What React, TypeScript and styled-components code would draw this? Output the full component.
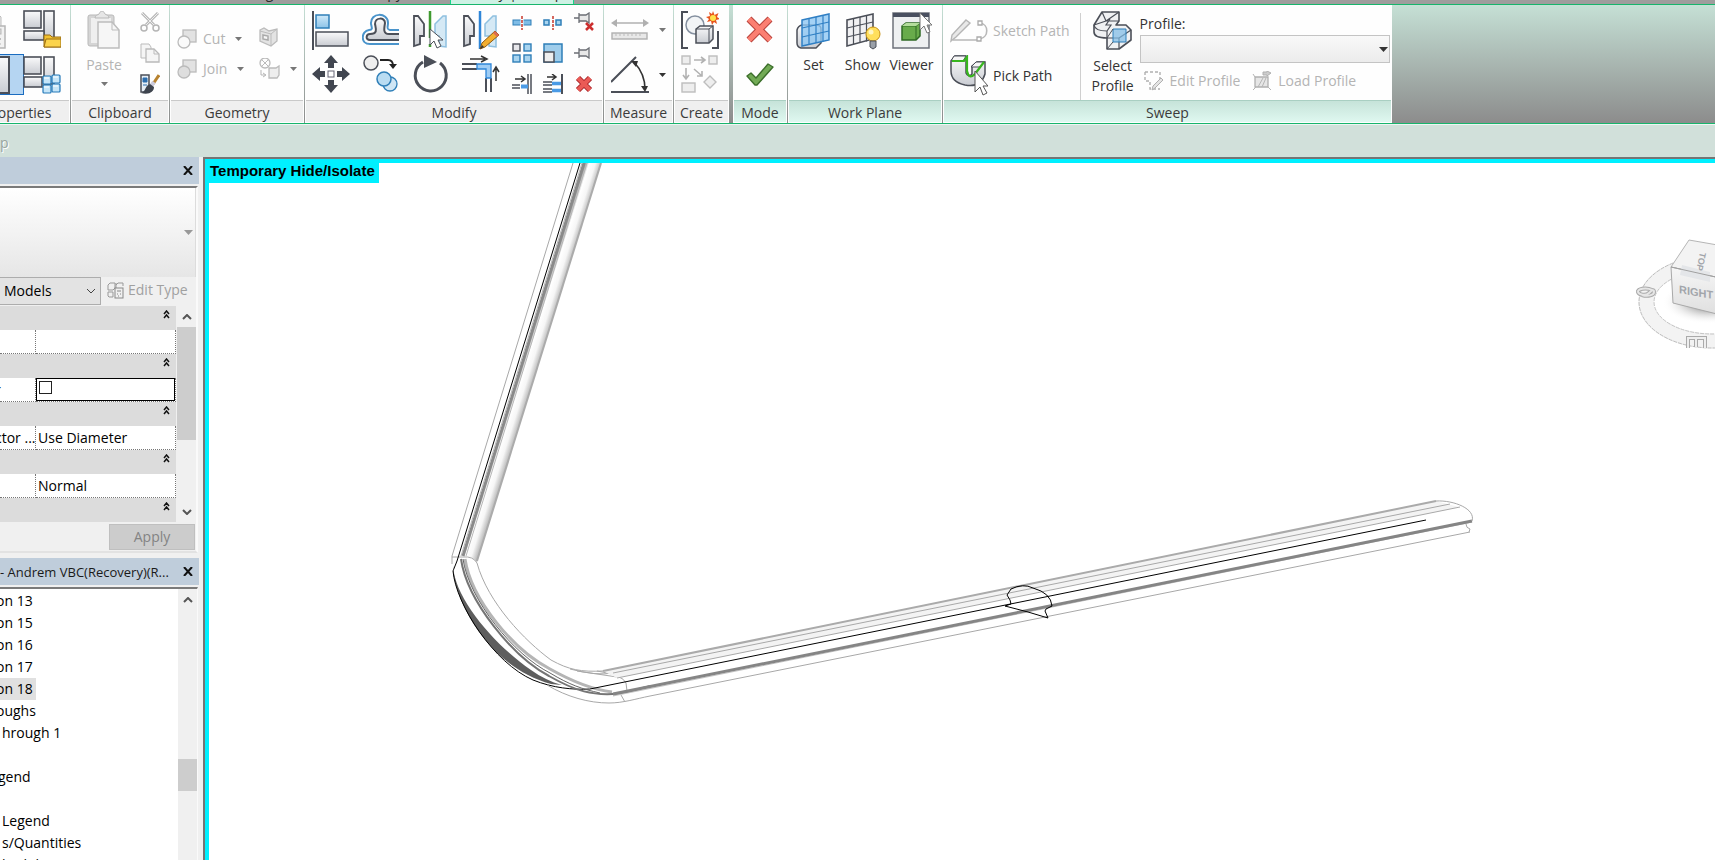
import React from "react";
import styled, { createGlobalStyle, css } from "styled-components";

const Global = createGlobalStyle`
  *, *::before, *::after { box-sizing: border-box; }
  body {
    margin: 0;
    overflow: hidden;
    background: #f0f0f0;
    color: #1a1a1a;
    font: 14px/20px "Open Sans", "Noto Sans", sans-serif;
  }
  button, select, input { font: inherit; color: inherit; margin: 0; }
`;

/* ---------- shell ---------- */

const Shell = styled.div`
  display: flex;
  flex-direction: column;
  height: 100vh;
  overflow: hidden;
`;

const TabStrip = styled.nav`
  display: flex;
  align-items: flex-end;
  flex: none;
  height: 5px;
  padding-left: 216px;
  overflow: hidden;
  background: #9f9d9d;
  border-bottom: 1px solid #17b56c;
`;

const Tab = styled.a<{ $width: number; $active?: boolean }>`
  display: block;
  flex: none;
  width: ${(p) => p.$width}px;
  height: 21px;
  text-align: center;
  text-decoration: none;
  line-height: 20px;
  color: #2b2b2b;
  ${(p) =>
    p.$active &&
    css`
      background: #cdf1e4;
      border: solid #17d58c;
      border-width: 0 1px;
    `}
`;

const Ribbon = styled.header`
  display: flex;
  flex: none;
  gap: 1px;
  height: 119px;
  overflow: hidden;
  background: linear-gradient(#c5e0d5, #8c8c8c);
  border-bottom: 1px solid #17b56c;
`;

const PanelBox = styled.section<{ $width: number; $cut?: number; $gap?: number }>`
  display: flex;
  flex: none;
  flex-direction: column;
  width: ${(p) => p.$width}px;
  margin-left: ${(p) => -(p.$cut ?? 0)}px;
  margin-right: ${(p) => p.$gap ?? 0}px;
  padding: 0 1px 1px;
  background: #fefefe;
`;

const PanelBody = styled.div`
  display: flex;
  flex: 1;
  min-height: 0;
  padding: 6px 6px 0;
`;

const PanelTitle = styled.h2<{ $green?: boolean }>`
  flex: none;
  margin: 0;
  height: 22px;
  border-top: 1px solid ${(p) => (p.$green ? "#a9cfc2" : "#c9c9c9")};
  background: ${(p) => (p.$green ? "linear-gradient(#c6e3d9, #dff8f0)" : "#efefef")};
  color: #3b3b3b;
  font-size: 14px;
  font-weight: 400;
  line-height: 24px;
  text-align: center;
  white-space: nowrap;
`;

function Panel(props: {
  title: string;
  width: number;
  cut?: number;
  gap?: number;
  green?: boolean;
  children: React.ReactNode;
}) {
  return (
    <PanelBox $width={props.width} $cut={props.cut} $gap={props.gap}>
      <PanelBody>{props.children}</PanelBody>
      <PanelTitle $green={props.green}>{props.title}</PanelTitle>
    </PanelBox>
  );
}

/* ---------- ribbon controls ---------- */

const ToolGrid = styled.div<{ $cols: number; $cell: number; $row: number; $left?: number; $top?: number }>`
  display: grid;
  grid-template-columns: repeat(${(p) => p.$cols}, ${(p) => p.$cell}px);
  grid-auto-rows: ${(p) => p.$row}px;
  align-content: start;
  margin-left: ${(p) => p.$left ?? 0}px;
  margin-top: ${(p) => p.$top ?? 0}px;
`;

const Tool = styled.button<{ $dim?: boolean; $wide?: boolean }>`
  display: flex;
  align-items: center;
  gap: ${(p) => (p.$wide ? 10 : 5)}px;
  justify-self: start;
  align-self: start;
  padding: 0;
  border: 0;
  background: none;
  color: ${(p) => (p.$dim ? "#b4b4b4" : "#333")};
  white-space: nowrap;
  svg { display: block; flex: none; }
`;

const StackTool = styled(Tool)<{ $width: number }>`
  flex-direction: column;
  gap: 5px;
  width: ${(p) => p.$width}px;
  text-align: center;
  svg + svg { margin-top: 2px; }
`;

const StateTool = styled(Tool)`
  width: 44px;
  height: 41px;
  justify-content: flex-end;
  padding-right: 12px;
  background: #b5d5f2;
  border: 1px solid #1a6cc0;
`;

const Column = styled.div<{ $gap?: number; $left?: number; $top?: number }>`
  display: flex;
  flex-direction: column;
  align-items: flex-start;
  gap: ${(p) => p.$gap ?? 0}px;
  margin-left: ${(p) => p.$left ?? 0}px;
  margin-top: ${(p) => p.$top ?? 0}px;
`;

const Divider = styled.div`
  width: 1px;
  height: 90px;
  margin-top: 2px;
  background: #cfcfcf;
`;

const Field = styled.label`
  display: flex;
  flex-direction: column;
  color: #333;
`;

const ComboWrap = styled.span`
  position: relative;
  display: block;
  margin-top: 1px;
  > svg {
    position: absolute;
    right: 2px;
    top: 12px;
    pointer-events: none;
  }
`;

const Combo = styled.select`
  display: block;
  appearance: none;
  width: 250px;
  height: 28px;
  border: 1px solid #c4c4c4;
  border-radius: 0;
  background: linear-gradient(#f9f9f9, #ececec);
`;

const ToolRow = styled.div`
  display: flex;
  gap: 12px;
  margin: 8px 0 0 4px;
`;

const OptionsBar = styled.div`
  flex: none;
  height: 33px;
  padding: 8px 0 0;
  border-top: 1px solid #eef5f2;
  background: #d1e0da;
  color: #9aa5a0;
  text-shadow: 1px 1px 0 #fff;
`;

/* ---------- docked palettes ---------- */

const Main = styled.div`
  display: flex;
  flex: 1;
  min-height: 0;
`;

const Dock = styled.aside`
  display: flex;
  flex: none;
  flex-direction: column;
  width: 203px;
  overflow: hidden;
  border-right: 4px solid #f0f0f0;
`;

const DockTitle = styled.header`
  display: flex;
  flex: none;
  align-items: center;
  justify-content: space-between;
  height: 27px;
  padding-right: 6px;
  background: #bfcddb;
  color: #1a1a1a;
  white-space: nowrap;
`;

const DockName = styled.span`
  font-size: 13px;
`;

const CloseButton = styled.button`
  margin-left: auto;
  padding: 0;
  border: 0;
  background: none;
  svg { display: block; }
`;

const PropsPanel = styled.div`
  flex: none;
  height: 367px;
  margin: 2px 1px 5px 0;
  border-top: 2px solid #7a7a7a;
  border-right: 2px solid #fafafa;
  border-bottom: 2px solid #e2e2e2;
`;

const TypeSelector = styled.button`
  display: flex;
  align-items: center;
  justify-content: flex-end;
  width: 100%;
  height: 89px;
  padding: 0 2px 0 0;
  border: 0;
  border-right: 1px solid #dcdcdc;
  background: linear-gradient(#fff, #e6e6e6);
`;

const FilterRow = styled.div`
  display: flex;
  height: 29px;
`;

const FilterWrap = styled.span`
  position: relative;
  > svg { position: absolute; right: 5px; top: 11px; pointer-events: none; }
`;

const FilterSelect = styled.select`
  appearance: none;
  width: 101px;
  height: 28px;
  padding: 0 0 0 4px;
  border: 1px solid #adadad;
  border-left: 0;
  border-radius: 0;
  background: #e3e3e3;
  color: #000;
`;

const EditType = styled(Tool)`
  height: 26px;
  gap: 4px;
  margin-left: 6px;
  color: #a0a0a0;
`;

const GridArea = styled.div`
  display: flex;
  height: 216px;
  overflow: hidden;
`;

const PropTable = styled.table`
  width: 176px;
  border-collapse: separate;
  border-spacing: 0;
  table-layout: fixed;
`;

const GroupCell = styled.th`
  height: 24px;
  padding: 4px 6px 0 0;
  background: #dcdcdc;
  line-height: 0;
  text-align: right;
  vertical-align: top;
  button { padding: 0; border: 0; background: none; line-height: 0; }
`;

const NameCell = styled.td`
  width: 36px;
  height: 24px;
  padding: 0;
  overflow: hidden;
  border-right: 1px dotted #777;
  border-bottom: 1px dotted #777;
  background: #fff;
  color: #000;
  white-space: nowrap;
`;

const NameText = styled.span`
  display: block;
  margin-left: -5px;
`;

const ValueCell = styled.td<{ $focus?: boolean }>`
  height: 24px;
  padding: 0 2px;
  border-right: 1px dotted #777;
  border-bottom: 1px dotted #777;
  background: #fff;
  color: #000;
  ${(p) => p.$focus && css`box-shadow: inset 0 0 0 1px #000;`}
`;

const Check = styled.input`
  display: block;
  appearance: none;
  width: 13px;
  height: 13px;
  margin: 0 0 4px 1px;
  border: 1px solid #222;
  background: #fff;
`;

const Scrollbar = styled.div`
  display: flex;
  flex-direction: column;
  flex: none;
  align-items: center;
  width: 19px;
  margin-left: 1px;
  background: #f0f0f0;
`;

const ScrollArrow = styled.button`
  display: flex;
  flex: none;
  align-items: center;
  justify-content: center;
  width: 100%;
  height: 21px;
  padding: 0;
  border: 0;
  background: none;
`;

const Thumb = styled.div<{ $before: number; $size: number }>`
  width: 100%;
  height: ${(p) => p.$size}px;
  margin-top: ${(p) => p.$before}px;
  margin-bottom: auto;
  background: #cdcdcd;
`;

const ApplyButton = styled.button`
  display: block;
  width: 86px;
  height: 26px;
  margin: 2px 1px 0 auto;
  padding: 0;
  border: 1px solid #bfbfbf;
  background: #ccc;
  color: #838383;
`;

const Browser = styled.div`
  display: flex;
  flex: 1;
  min-height: 0;
  margin-top: 2px;
  margin-right: 1px;
  overflow: hidden;
  border-top: 2px solid #7a7a7a;
  border-right: 1px solid #fafafa;
  background: #fff;
`;

const Tree = styled.ul`
  flex: 1;
  margin: 0 0 0 -4px;
  padding: 1px 0 0;
  list-style: none;
  overflow: hidden;
`;

const TreeItem = styled.li<{ $selected?: boolean; $level: number }>`
  width: fit-content;
  height: 22px;
  padding: 0 3px 0 ${(p) => p.$level * 2}px;
  background: ${(p) => (p.$selected ? "#e0e0e0" : "none")};
  color: #000;
  line-height: 22px;
  white-space: pre;
`;

/* ---------- drawing area ---------- */

const ViewFrame = styled.main`
  position: relative;
  flex: 1;
  min-width: 0;
  overflow: hidden;
  border: solid #757575;
  border-width: 2px 0 0 2px;
`;

const IsolateFrame = styled.div`
  height: 100%;
  overflow: hidden;
  border: solid #00f0ff;
  border-width: 4px 0 0 4px;
  background: #fff;
`;

const IsolateLabel = styled.div`
  position: absolute;
  top: 0;
  left: 0;
  padding: 2px 4px 2px 5px;
  background: #00f0ff;
  color: #000;
  font: bold 15px/20px "Liberation Sans", Arial, sans-serif;
  white-space: nowrap;
`;

const Canvas = styled.svg`
  display: block;
  width: 100%;
  height: 100%;
`;

const HiddenDefs = styled.svg`
  position: absolute;
  width: 0;
  height: 0;
`;

/* ---------- icons ---------- */

function Icon({ w, h, children }: { w: number; h: number; children: React.ReactNode }) {
  return (
    <svg width={w} height={h} viewBox={`0 0 ${w} ${h}`} fill="none" aria-hidden="true">
      {children}
    </svg>
  );
}

const Caret = ({ color = "#444" }: { color?: string }) => (
  <Icon w={7} h={4}><path d="M0 0h7L3.500 4z" fill={color} /></Icon>
);

const DK = "#4b4f58";
const BL = "#2f7fb8";

const WindowFolder = () => (
  <Icon w={38} h={39}>
    <g stroke={DK} strokeWidth="1.600" fill="url(#metal)">
      <rect x="1" y="1" width="17" height="17" /><rect x="21" y="1" width="10" height="27" /><rect x="1" y="21" width="20" height="9" />
    </g>
    <path d="M21 37V25h6l2 2h9v10z" fill="#f2c22e" stroke="#9a6d12" />
    <path d="M21 37l2-8h15v8z" fill="#fbd34c" stroke="#9a6d12" />
  </Icon>
);
const WindowFamily = () => (
  <Icon w={38} h={39}>
    <g stroke={DK} strokeWidth="1.600" fill="url(#metal)">
      <rect x="1" y="1" width="17" height="17" /><rect x="21" y="1" width="10" height="27" /><rect x="1" y="21" width="18" height="10" />
    </g>
    <g fill="#c5e5f8" stroke="#2378b8" strokeWidth="1.200">
      <rect x="20" y="20" width="8" height="8" rx="1" /><rect x="29" y="19" width="8" height="8" rx="1" />
      <rect x="20" y="29" width="8" height="8" rx="1" /><rect x="29" y="28" width="8" height="8" rx="1" />
    </g>
    <path d="M21 22h5M30 21h5M21 31h5M30 30h5" stroke="#fff" />
  </Icon>
);
const DimProps = () => (
  <Icon w={26} h={38}>
    <path d="M8 1h8l5 5v9M8 1v14" stroke="#bbb" fill="#eee" />
    <rect x="2" y="15" width="23" height="22" fill="#f2f2f2" stroke="#b5b5b5" strokeWidth="1.500" />
    <rect x="14" y="18" width="7" height="5" stroke="#b5b5b5" fill="#ddd" /><path d="M14 28h6m-2-2 3 2-3 2M14 33h7" stroke="#b5b5b5" />
  </Icon>
);
const Sheet = () => (
  <Icon w={16} h={38}><rect x="-4" y="1" width="18" height="36" fill="url(#metal)" stroke={DK} strokeWidth="2" /><path d="M3 5v26" stroke="#9aa" /></Icon>
);

const PasteIcon = () => (
  <Icon w={34} h={39}>
    <rect x="1" y="4" width="26" height="31" rx="2" fill="#d5d5d5" stroke="#b9b9b9" />
    <rect x="4" y="7" width="20" height="25" fill="#efefef" />
    <path d="M8 7c0-3 3-3 4-4s1-3 3-3 2 2 3 3 4 1 4 4z" fill="#e6e6e6" stroke="#b9b9b9" />
    <path d="M11 11h14l7 8v18H11z" fill="#f6f6f6" stroke="#bdbdbd" strokeWidth="1.500" /><path d="M25 11v8h7" stroke="#bdbdbd" />
  </Icon>
);
const CutIcon = () => (
  <Icon w={20} h={20}>
    <path d="M2 1l12 12M18 1L6 13" stroke="#b9b9b9" strokeWidth="3" /><path d="M2 1l12 12M18 1L6 13" stroke="#eee" />
    <circle cx="4" cy="16" r="3" stroke="#b5b5b5" strokeWidth="1.500" /><circle cx="16" cy="16" r="3" stroke="#b5b5b5" strokeWidth="1.500" />
  </Icon>
);
const CopyIcon = () => (
  <Icon w={20} h={20}>
    <path d="M1 1h8l2 3v11H1z" fill="#f5f5f5" stroke="#bbb" /><path d="M6 6h8l5 5v8H6z" fill="#f5f5f5" stroke="#b9b9b9" strokeWidth="1.300" /><path d="M14 6v5h5" stroke="#bbb" />
  </Icon>
);
const MatchIcon = () => (
  <Icon w={20} h={20}>
    <path d="M1 1h8v17H1z" fill="#e6eef6" stroke={DK} strokeWidth="1.500" /><path d="M3 4h4v4H3zM3 11h4" fill="#2d6fae" stroke="#2d6fae" />
    <path d="M19 1l-6 9" stroke="#b7822e" strokeWidth="3" /><path d="M14 8l-3 4" stroke="#ccd" strokeWidth="4" />
    <path d="M1 19c5-1 4-8 9-9l4 3c0 5-5 8-13 6z" fill="#3e444e" />
  </Icon>
);
const CutGeo = () => (
  <Icon w={21} h={20}><rect x="6" y="1" width="13" height="12" fill="#e2e2e2" stroke="#bbb" strokeWidth="1.300" /><circle cx="7" cy="13" r="6" fill="#fafafa" stroke="#bbb" strokeWidth="1.300" /></Icon>
);
const JoinGeo = () => (
  <Icon w={21} h={20}><rect x="6" y="1" width="13" height="12" fill="#e2e2e2" stroke="#bbb" strokeWidth="1.300" /><circle cx="7" cy="13" r="6" fill="#dedede" stroke="#bbb" strokeWidth="1.300" /></Icon>
);
const FaceGeo = () => (
  <Icon w={20} h={20}><path d="M1 3l4-2 5 3 8-2v12l-6 5-11-5z" fill="#e3e3e3" stroke="#bbb" strokeWidth="1.300" /><path d="M12 19V7l6-5M12 7L1 4" stroke="#bbb" /><path d="M4 8l5 1v4l-5-1z" fill="#f6f6f6" stroke="#aaa" strokeWidth="1.500" /></Icon>
);
const SplitGeo = () => (
  <Icon w={21} h={21}><circle cx="6" cy="5" r="5" stroke="#bbb" strokeWidth="1.300" /><path d="M3 2l6 6M9 2L3 8" stroke="#bbb" /><path d="M10 10h7l3-2v9l-2 3h-8z" fill="#eee" stroke="#bbb" strokeWidth="1.300" /><path d="M2 12v5h4m-2-2 3 2-3 2" stroke="#b5b5b5" /></Icon>
);

const AlignIcon = () => (
  <Icon w={38} h={39}><path d="M1 0v39" stroke={DK} strokeWidth="2" /><rect x="4" y="4" width="13" height="13" fill="url(#sky)" stroke={BL} strokeWidth="1.500" /><rect x="4" y="21" width="32" height="14" fill="url(#metal)" stroke={DK} strokeWidth="1.500" /></Icon>
);
const OffsetIcon = () => (
  <Icon w={38} h={39}>
    <path d="M37 33H8C-2 33-1 20 7 19c4 0 3-2 2-6C8 1 26 1 26 12c0 4-2 6 2 7h9" stroke="#4a94cb" strokeWidth="2" />
    <path d="M37 29H8c-5 0-4-6 0-6 8 0 6-5 5-10 0-7 10-7 10-1-1 6-2 11 4 11h10" fill="url(#metal)" stroke={DK} strokeWidth="2" />
  </Icon>
);
const Halves = () => (
  <>
    <path d="M2 5h4l6 8v12H8v8l-6 2z" fill="url(#metal)" stroke={DK} strokeWidth="1.800" />
    <path d="M34 5h-3l-8 8v12h4v10l7 1z" fill="#d5e9f5" stroke="#8fc0e0" strokeWidth="1.500" />
  </>
);
const MirrorPick = () => (
  <Icon w={38} h={39}><Halves /><path d="M18 0v27m0 6v3" stroke="#3f9a2f" strokeWidth="2.500" /><path d="M18 18v16l4-4 3 7 4-2-3-6h5z" fill="#fff" stroke={DK} /></Icon>
);
const MirrorDraw = () => (
  <Icon w={38} h={39}><Halves /><path d="M18 0v38" stroke="#2f86d8" strokeWidth="2.500" /><path d="M33 20l4 4-14 12-5 2 2-6z" fill="#f3ae2e" stroke="#8c5a12" /><path d="M33 20l4 4-2 2-4-4z" fill="#dc6a50" /><path d="M20 34l-2 4 4-2z" fill="#333" /></Icon>
);
const MoveIcon = () => (
  <Icon w={38} h={38}><path d="M19 0l7 8h-4v5h-6V8h-4zM19 38l7-8h-4v-5h-6v5h-4zM0 19l8-7v4h5v6H8v4zM38 19l-8-7v4h-5v6h5v4z" fill="#414650" /><rect x="16" y="16" width="6" height="6" fill="#fff" stroke="#667" /></Icon>
);
const CopyMove = () => (
  <Icon w={38} h={38}><circle cx="9" cy="8" r="7" fill="#eee" stroke={DK} strokeWidth="1.500" /><path d="M18 5h8q5 0 5 6" stroke="#222" strokeWidth="1.800" /><path d="M27 9h8l-4 5z" fill="#222" /><circle cx="28" cy="29" r="7" fill="#cfe6f5" stroke={BL} strokeWidth="1.300" /><circle cx="22" cy="24" r="7" fill="#b9dcf2" stroke={BL} strokeWidth="1.500" /></Icon>
);
const RotateIcon = () => (
  <Icon w={38} h={38}><path d="M28 8a15.500 15.500 0 1 1-17-1" stroke={DK} strokeWidth="3" /><path d="M12 0l13 7-13 6z" fill={DK} /></Icon>
);
const TrimIcon = () => (
  <Icon w={38} h={38}><path d="M0 9h15M0 14h15M24 23v14M29 23v14" stroke={DK} strokeWidth="2" /><path d="M15 9h14v14h-5v-9h-9z" fill="#9fcdf5" stroke="#2f86d8" strokeWidth="1.300" /><path d="M8 4h15m-4-3 6 3-6 3M34 26V14m-3 3 3-5 3 5" stroke="#333" strokeWidth="1.500" /></Icon>
);
const SplitEl = () => (
  <Icon w={20} h={20}><rect x="1" y="8" width="18" height="5" fill="#7fbce6" stroke={BL} /><path d="M10 4v14" stroke="#fff" strokeWidth="3" /><path d="M10 4v14" stroke="#c8372b" strokeWidth="1.500" strokeDasharray="3 1" /></Icon>
);
const SplitGap = () => (
  <Icon w={20} h={20}><rect x="1" y="8" width="5" height="5" fill="#a9d4ef" stroke={BL} strokeWidth="1.500" /><rect x="13" y="8" width="5" height="5" fill="#a9d4ef" stroke={BL} strokeWidth="1.500" /><path d="M10 4v14" stroke="#c8372b" strokeWidth="1.500" strokeDasharray="3 1" /></Icon>
);
const PinShape = ({ y }: { y: number }) => (
  <path transform={`translate(0 ${y})`} d="M0 7h5M5 2v10M5 4h7l3-2v10l-3-2H5z" fill="#e8e8e8" stroke="#6b6e74" strokeWidth="1.300" />
);
const Unpin = () => (
  <Icon w={20} h={20}><PinShape y={-1} /><path d="M12 11l7 7m0-7l-7 7" stroke="#cc2f2f" strokeWidth="2.500" /></Icon>
);
const Pin = () => <Icon w={20} h={20}><PinShape y={3} /></Icon>;
const ArrayIcon = () => (
  <Icon w={20} h={20}><g strokeWidth="1.400"><rect x="1" y="1" width="7" height="7" fill="#e6e6ea" stroke={DK} /><g fill="#a9d4ef" stroke={BL}><rect x="12" y="1" width="7" height="7" /><rect x="1" y="12" width="7" height="7" /><rect x="12" y="12" width="7" height="7" /></g></g></Icon>
);
const ScaleIcon = () => (
  <Icon w={20} h={20}><path d="M1 1h18v18H1z" fill="#9fcdeb" stroke={BL} strokeWidth="1.500" /><rect x="1" y="9" width="10" height="10" fill="#eee" stroke={DK} strokeWidth="1.500" /></Icon>
);
const TrimOne = () => (
  <Icon w={20} h={20}><path d="M16 0v20M19 0v20" stroke={DK} strokeWidth="1.500" /><path d="M0 11h8M0 14h8" stroke={DK} strokeWidth="1.500" /><path d="M9 12.500h7" stroke="#4a9be6" strokeWidth="4" /><path d="M3 5h9m-3-3 4 3-4 3" stroke="#333" strokeWidth="1.500" /></Icon>
);
const TrimMany = () => (
  <Icon w={20} h={20}><path d="M19 0v20" stroke={DK} strokeWidth="2" /><path d="M0 8h9M0 11h9M0 15h9M0 18h9" stroke={DK} strokeWidth="1.500" /><path d="M9 9.500h9M9 16.500h9" stroke="#4a9be6" strokeWidth="3.500" /><path d="M4 3h8m-3-3 4 3-4 3" stroke="#333" strokeWidth="1.500" /></Icon>
);
const DeleteIcon = () => (
  <Icon w={20} h={20}><path d="M4 4l12 12m0-12L4 16" stroke="#a8252a" strokeWidth="6" /><path d="M4 4l12 12m0-12L4 16" stroke="#ea5a55" strokeWidth="4" /></Icon>
);

const RulerIcon = () => (
  <Icon w={38} h={24}><path d="M3 5h32" stroke="#b5b5b5" strokeWidth="1.600" /><path d="M0 5l6-4v8zM38 5l-6-4v8z" fill="#b0b0b0" /><rect x="1" y="15" width="35" height="6" fill="#e8e8e8" stroke="#b0b0b0" strokeWidth="1.400" /><path d="M5 15v3m4-3v3m4-3v3m4-3v3m4-3v3m4-3v3m4-3v3" stroke="#bbb" /></Icon>
);
const AngleIcon = () => (
  <Icon w={38} h={38}><path d="M0 36h38M0 26L25 1" stroke={DK} strokeWidth="2" /><path d="M23 6q11 12 11 27" stroke="#333" strokeWidth="1.600" /><path d="M20 5l7 0-2 6zM30 30h7l-3 6z" fill="#333" /></Icon>
);
const GroupIcon = () => (
  <Icon w={38} h={38}>
    <path d="M7 1H1v36h6M31 37h6V20" stroke={DK} strokeWidth="2" /><circle cx="14" cy="14" r="9" fill="#f2f4f6" stroke="#8590a0" strokeWidth="1.500" />
    <path d="M15 18l4-3h13v13l-4 4H15z" fill="url(#metal)" stroke={DK} strokeWidth="1.500" /><path d="M15 18h13l4-3M28 18v14" stroke={DK} />
    <path d="M32 0l1.500 4 4-2-1.500 4 3 2-4 1 1 4-3-2-2 3-1-4-4 1 2-3-3-2 4-1-1-4 3 2z" fill="#e8541c" /><circle cx="32" cy="7" r="3" fill="#ffe14a" />
  </Icon>
);
const AssemblyIcon = () => (
  <Icon w={38} h={38}><g stroke="#bdbdbd" strokeWidth="1.400" fill="#eee"><rect x="1" y="1" width="8" height="8" /><rect x="28" y="1" width="8" height="8" /><rect x="1" y="28" width="13" height="9" /><path d="M29 21l6 6-6 6-6-6z" /></g><path d="M13 5h10m-3-3 4 3-4 3M5 13v10m-3-3 3 4 3-4M13 14l8 7m0-5v5h-5" stroke="#b2b2b2" strokeWidth="1.600" /></Icon>
);
const CancelIcon = () => (
  <Icon w={30} h={30}><path d="M4 4l21 21M25 4L4 25" stroke="#b8433c" strokeWidth="7" /><path d="M4 4l21 21M25 4L4 25" stroke="#fb7f72" strokeWidth="5" /></Icon>
);
const FinishIcon = () => (
  <Icon w={30} h={26}><path d="M2 14l4-3 5 5L23 2l5 3-16 18h-2z" fill="#72ab55" stroke="#3c6f2b" strokeWidth="1.400" strokeLinejoin="round" /></Icon>
);
const SetPlane = () => (
  <Icon w={38} h={38}>
    <path d="M2 18q1-4 5-5h14q5 0 5 4v14l-5 5H6q-4-1-4-5z" fill="url(#metal)" stroke={DK} strokeWidth="1.500" />
    <path d="M7 8l27-6v26L7 34z" fill="#8fc7f3" fillOpacity=".8" stroke="#2f7fc4" strokeWidth="1.500" /><path d="M14 6.500v26M21 5v26M28 3.500v26M7 16l27-6M7 25l27-6" stroke="#2f7fc4" strokeWidth="1.200" />
  </Icon>
);
const ShowPlane = () => (
  <Icon w={36} h={38}>
    <path d="M2 8l26-6v25L2 34z" fill="#f1f1f3" stroke={DK} strokeWidth="1.600" /><path d="M8.500 6.500v26M15 5v26M21.500 3.500v26M2 16l26-6M2 25l26-6" stroke={DK} strokeWidth="1.200" />
    <circle cx="28" cy="22" r="7" fill="#ffdf5c" stroke="#c89216" /><circle cx="26" cy="20" r="2.500" fill="#fff6c4" /><path d="M25 29h6v6l-3 2-3-2z" fill="#9aa0a8" stroke={DK} />
  </Icon>
);
const ViewerIcon = () => (
  <Icon w={40} h={38}>
    <rect x="1" y="1" width="36" height="35" fill="#eef0f1" stroke="#6d727a" strokeWidth="1.500" /><path d="M1 3h36" stroke="#4a5060" strokeWidth="4" />
    <path d="M10 14l4-3h14v13l-4 4H10z" fill="#68ab4b" stroke="#2f6a24" strokeWidth="1.500" /><path d="M10 14h14l4-3M24 14v14" stroke="#2f6a24" /><path d="M10 14l4-3h14l-4 3z" fill="#b4dd9c" />
    <path d="M28 1v17l4-4 3 7 3-1-3-7h5z" fill="#fff" stroke="#777" />
  </Icon>
);
const SketchIcon = () => (
  <Icon w={38} h={24}><path d="M16 1l4 3L6 18l-5 4 1-6z" fill="#e8e8e8" stroke="#b5b5b5" strokeWidth="1.400" /><path d="M3 21h25M30 4c9 1 9 14 0 16" stroke="#b8b8b8" strokeWidth="1.600" /><path d="M28 2h4v4h-4zM27 18h4v4h-4z" fill="#fff" stroke="#aaa" strokeWidth="1.300" /></Icon>
);
const PickPathIcon = () => (
  <Icon w={38} h={41}>
    <path d="M1 6l4-5h11v17q2 5 6 1V11l5-4h8v12q-4 14-20 11Q1 27 1 16z" fill="url(#metal)" stroke={DK} strokeWidth="1.500" />
    <path d="M1 6l3-5h12l-3 5z" fill="#f6f6f6" stroke={DK} /><path d="M21 12l5-5h9l-5 5z" fill="#f6f6f6" stroke={DK} /><path d="M2 6h12l3-4v14q2 9 8 3l9-12" stroke="#38b51f" strokeWidth="2.200" />
    <path d="M25 16v21l5-5 3 8 4-2-4-7h5z" fill="#fff" stroke="#555" />
  </Icon>
);
const SelectProfileIcon = () => (
  <Icon w={40} h={40}>
    <path d="M1 14L9 1h17v9l-3 4h10l5 5v10l-12 9H14V27q-13 0-13-6z" fill="#f0f1f3" stroke={DK} strokeWidth="1.600" strokeLinejoin="round" />
    <path d="M1 14q1 6 13 6l4-6h-5l4-6M9 1l4 9h13M1 14l12-4M26 1L13 10M14 20v7M14 27h12v11M26 27l12-8" stroke={DK} strokeWidth="1.200" /><path d="M20 18h13v13H20z" fill="#7dbbe6" fillOpacity=".7" stroke="#2f7fb8" />
    <path d="M14 38l6-7M14 27l6-9" stroke={DK} />
  </Icon>
);
const EditProfileIcon = () => (
  <Icon w={21} h={20}><path d="M1 1h15v9M1 1v9h5v8h10" stroke="#b0b0b0" strokeWidth="1.400" strokeDasharray="3 2" /><path d="M17 7l2 2-8 8-3 2 1-4z" fill="#e5e5e5" stroke="#b0b0b0" /></Icon>
);
const LoadProfileIcon = () => (
  <Icon w={21} h={20}><path d="M3 6h13v10H3z" fill="#e6e6e6" stroke="#b0b0b0" strokeWidth="1.300" /><path d="M1 3l2 3M1 19l3-3M16 16l3 3M6 16l5-9M10 16l4-9" stroke="#b5b5b5" /><path d="M11 1h4V0l4 2-4 3V4h-4z" fill="#ccc" stroke="#b0b0b0" /></Icon>
);

const CloseX = () => <Icon w={10} h={9}><path d="M1 0l8 9M9 0L1 9" stroke="#111" strokeWidth="2" /></Icon>;
const Collapse = () => <Icon w={7} h={9}><path d="M1 4l2.500-3L6 4M1 8l2.500-3L6 8" stroke="#111" strokeWidth="1.500" /></Icon>;
const Chevron = ({ down }: { down?: boolean }) => (
  <Icon w={10} h={6}><path d={down ? "M1 1l4 4 4-4" : "M1 5l4-4 4 4"} stroke="#555" strokeWidth="2" /></Icon>
);
const ThinChevron = () => <Icon w={10} h={6}><path d="M1 1l4 4 4-4" stroke="#444" /></Icon>;
const EditTypeIcon = () => (
  <Icon w={17} h={17}><path d="M1 3l2-2h5v5l-2 2H1zM9 3l2-2h5v3M9 1v5M1 10h5v5H2l-1-1z" stroke="#999" /><rect x="8" y="6" width="8" height="10" fill="#f0f0f0" stroke="#888" /><path d="M10 9h4M10 12h1m2 0h1m-3 2h1" stroke="#888" /></Icon>
);

/* ---------- model drawing ---------- */

const modelLine = { fill: "none", stroke: "#a8a8a8", strokeWidth: 1 };

function Model() {
  return (
    <Canvas viewBox="209 163 1506 697" preserveAspectRatio="xMinYMin slice" role="img" aria-label="3D sweep model">
      <defs>
        <linearGradient id="post" gradientUnits="userSpaceOnUse" x1="583" y1="163" x2="602" y2="169">
          <stop offset="0" stopColor="#777" /><stop offset=".1" stopColor="#999" /><stop offset=".3" stopColor="#fff" /><stop offset=".6" stopColor="#f6f6f6" /><stop offset=".9" stopColor="#bbb" /><stop offset="1" stopColor="#999" />
        </linearGradient>
        <radialGradient id="shade"><stop offset=".4" stopColor="#bbb" /><stop offset="1" stopColor="#fff" stopOpacity="0" /></radialGradient>
        <linearGradient id="cube" x2="0" y2="1"><stop offset="0" stopColor="#f6f6f6" /><stop offset="1" stopColor="#dedede" /></linearGradient>
      </defs>

      {/* upright leg */}
      <path d="M584 163h17L477 562q-5-6-14-6z" fill="url(#post)" />
      <path d="M584 163L463 556" fill="none" stroke="#8a8a8a" strokeWidth="3" />
      <path d="M582 163L461 556M587 163L466 556" fill="none" stroke="#b5b5b5" />
      <path d="M601 163L477 561" fill="none" stroke="#ababab" strokeWidth="2" />
      <path d="M573 163L452 556v8M452 557h11q10-1 14 6" {...modelLine} />
      <path d="M580 163L457 561l-4 10" fill="none" stroke="#000" />

      {/* bend */}
      <path d="M453 566c2 34 43 80 78 104 10 7 20 12 31 15l-11-1c-60-16-94-78-98-113z" fill="#5e5e5e" />
      <path d="M453 571c3 34 41 92 80 109 20 8 40 10 57 9" fill="none" stroke="#000" />
      <path d="M465 559c6 40 48 91 85 110 16 9 38 20 62 23" fill="none" stroke="#b5b5b5" strokeWidth="3" />
      <path d="M461 559c6 42 52 98 88 117 28 16 44 19 64 18 14-1 26-5 37-8" fill="none" stroke="#757575" strokeWidth="2" />
      <path d="M463 559c6 41 51 96 87 114 20 12 32 16 50 20" fill="none" stroke="#666" />
      <path d="M477 563c11 40 48 78 74 97 18 10 30 12 52 11" {...modelLine} />
      <path d="M547 685c20 12 42 18 62 18 14 0 26-4 41-7L1470 532" {...modelLine} />
      <path d="M577 671l40 6M570 669q26 7 43 4M597 671q26 4 29 12l1 8M621 695l4 7" {...modelLine} />

      {/* long leg */}
      <path d="M603 671L1436 501l23 6L617 678z" fill="#f3f3f3" />
      <path d="M603 671L1436 501" fill="none" stroke="#aaa" strokeWidth="2" />
      <path d="M613 673L1450 504M617 678L1460 507" {...modelLine} />
      <path d="M613 696L1472 522" fill="none" stroke="#c4c4c4" />
      <path d="M613 694L1472 521" fill="none" stroke="#858585" strokeWidth="3" />
      <path d="M1436 501c18-1 40 8 36 20M1466 524q0 4 4 5l-1 3" {...modelLine} />
      <path d="M590 689L1426 520" fill="none" stroke="#000" />
      <path d="M1005 606l6-2-1-4-3-5 4-6q12-6 22-1 18 5 19 18l-6 3-1 2 3 7-20-6z" fill="none" stroke="#000" />

      {/* view cube */}
      <ellipse cx="1712" cy="302" rx="66" ry="39" fill="none" stroke="#f3f3f3" strokeWidth="15" />
      <ellipse cx="1712" cy="302" rx="73" ry="46" fill="none" stroke="#bdbdbd" strokeDasharray="4 1" />
      <ellipse cx="1712" cy="302" rx="58" ry="32" fill="none" stroke="#c4c4c4" strokeDasharray="4 1" />
      <ellipse cx="1708" cy="302" rx="46" ry="22" fill="url(#shade)" />
      <path d="M1689 240l40 7v34l-14-4-44-10z" fill="#f3f3f3" stroke="#b5b5b5" />
      <path d="M1671 267l58 13v37l-56-14z" fill="url(#cube)" stroke="#a8a8a8" />
      <path d="M1682 265l28 7v10l-30-7z" fill="#e4e6e9" />
      <path d="M1671 267l58 13" stroke="#a0a0a0" />
      <text transform="translate(1679 293) skewY(10)" fontFamily="Liberation Sans, sans-serif" fontWeight="bold" fontSize="11" fill="#a2a5aa">RIGHT</text>
      <text transform="translate(1700 252) rotate(102)" fontFamily="Liberation Sans, sans-serif" fontWeight="bold" fontSize="9" fill="#a2a5aa">TOP</text>
      <path d="M1652 290c-6-3-15-1-14 2s8 4 11 1 5-4 5-1-6 5-12 3" fill="none" stroke="#aaa" strokeWidth="4" />
      <path d="M1652 290c-6-3-15-1-14 2s8 4 11 1 5-4 5-1-6 5-12 3" fill="none" stroke="#e6e6e6" strokeWidth="2" />
      <path d="M1688 348v-10h17v10M1696 338v9" fill="none" stroke="#aaa" strokeWidth="4" />
      <path d="M1688 348v-10h17v10M1696 338v9" fill="none" stroke="#eee" strokeWidth="2" />
    </Canvas>
  );
}

/* ---------- data ---------- */

const browserRows: { text: string; level: number; selected?: boolean }[] = [
  { text: "on 13", level: 0 }, { text: "on 15", level: 0 }, { text: "on 16", level: 0 }, { text: "on 17", level: 0 },
  { text: "on 18", level: 0, selected: true }, { text: "oughs", level: 0 }, { text: "hrough 1", level: 3 }, { text: "", level: 0 },
  { text: "gend", level: 1 }, { text: "", level: 0 }, { text: "Legend", level: 3 }, { text: "s/Quantities", level: 3 }, { text: "hedule", level: 3 },
];

const properties: { name: string; value?: string; check?: boolean }[] = [
  { name: "", value: "" },
  { name: "r", check: true },
  { name: "ctor ...", value: "Use Diameter" },
  { name: "", value: "Normal" },
];

const GroupRow = () => (
  <tr>
    <GroupCell colSpan={2}><button aria-label="Collapse group"><Collapse /></button></GroupCell>
  </tr>
);

export default function App() {
  return (
    <Shell>
      <Global />
      <HiddenDefs aria-hidden="true">
        <defs>
          <linearGradient id="metal" x2="0" y2="1"><stop offset="0" stopColor="#fafafb" /><stop offset="1" stopColor="#c9ccd2" /></linearGradient>
          <linearGradient id="sky" x2="0" y2="1"><stop offset="0" stopColor="#cfe9f9" /><stop offset="1" stopColor="#8ec4e8" /></linearGradient>
        </defs>
      </HiddenDefs>

      <TabStrip>
        <Tab href="#manage" $width={78}>Manage</Tab>
        <Tab href="#addins" $width={78}>Add-Ins</Tab>
        <Tab href="#pyrevit" $width={78}>pyRevit</Tab>
        <Tab href="#sweep" $width={124} $active>Modify | Sweep</Tab>
      </TabStrip>

      <Ribbon>
        <Panel title="Properties" width={105} cut={35}>
          <Column $gap={5} $left={8}>
            <Tool aria-label="Family types"><DimProps /></Tool>
            <StateTool aria-label="Properties"><Sheet /></StateTool>
          </Column>
          <Column $gap={7} $left={-1} $top={-1}>
            <Tool aria-label="Family category"><WindowFolder /></Tool>
            <Tool aria-label="Type properties"><WindowFamily /></Tool>
          </Column>
        </Panel>

        <Panel title="Clipboard" width={98}>
          <StackTool $dim $width={52}><PasteIcon />Paste<Caret color="#777" /></StackTool>
          <ToolGrid $cols={1} $cell={20} $row={31} $left={10} $top={1}>
            <Tool aria-label="Cut to clipboard"><CutIcon /></Tool>
            <Tool aria-label="Copy"><CopyIcon /></Tool>
            <Tool aria-label="Match type"><MatchIcon /></Tool>
          </ToolGrid>
        </Panel>

        <Panel title="Geometry" width={134}>
          <Column $gap={10} $top={18}>
            <Tool $dim><CutGeo />Cut<span /><Caret color="#777" /></Tool>
            <Tool $dim><JoinGeo />Join<span /><Caret color="#777" /></Tool>
          </Column>
          <Column $gap={11} $left={15} $top={16}>
            <Tool aria-label="Paint"><FaceGeo /></Tool>
            <Tool $wide aria-label="Split face"><SplitGeo /><Caret color="#777" /></Tool>
          </Column>
        </Panel>

        <Panel title="Modify" width={298}>
          <ToolGrid $cols={4} $cell={50} $row={44}>
            <Tool aria-label="Align"><AlignIcon /></Tool>
            <Tool aria-label="Offset"><OffsetIcon /></Tool>
            <Tool aria-label="Mirror, pick axis"><MirrorPick /></Tool>
            <Tool aria-label="Mirror, draw axis"><MirrorDraw /></Tool>
            <Tool aria-label="Move"><MoveIcon /></Tool>
            <Tool aria-label="Copy elements"><CopyMove /></Tool>
            <Tool aria-label="Rotate"><RotateIcon /></Tool>
            <Tool aria-label="Trim to corner"><TrimIcon /></Tool>
          </ToolGrid>
          <ToolGrid $cols={3} $cell={31} $row={31} $top={1}>
            <Tool aria-label="Split element"><SplitEl /></Tool>
            <Tool aria-label="Split with gap"><SplitGap /></Tool>
            <Tool aria-label="Unpin"><Unpin /></Tool>
            <Tool aria-label="Array"><ArrayIcon /></Tool>
            <Tool aria-label="Scale"><ScaleIcon /></Tool>
            <Tool aria-label="Pin"><Pin /></Tool>
            <Tool aria-label="Trim single"><TrimOne /></Tool>
            <Tool aria-label="Trim multiple"><TrimMany /></Tool>
            <Tool aria-label="Delete"><DeleteIcon /></Tool>
          </ToolGrid>
        </Panel>

        <Panel title="Measure" width={69}>
          <Column $gap={14} $top={7}>
            <Tool $wide aria-label="Aligned dimension"><RulerIcon /><Caret color="#777" /></Tool>
            <Tool $wide aria-label="Angular dimension"><AngleIcon /><Caret color="#333" /></Tool>
          </Column>
        </Panel>

        <Panel title="Create" width={55} gap={3}>
          <Column $gap={6}>
            <Tool aria-label="Create group"><GroupIcon /></Tool>
            <Tool aria-label="Create assembly"><AssemblyIcon /></Tool>
          </Column>
        </Panel>

        <Panel title="Mode" width={54} green>
          <Column $gap={17} $left={5} $top={4}>
            <Tool aria-label="Cancel edit mode"><CancelIcon /></Tool>
            <Tool aria-label="Finish edit mode"><FinishIcon /></Tool>
          </Column>
        </Panel>

        <Panel title="Work Plane" width={154} green>
          <ToolGrid $cols={3} $cell={49} $row={70} $left={-6} $top={1}>
            <StackTool $width={49}><SetPlane />Set</StackTool>
            <StackTool $width={49}><ShowPlane />Show</StackTool>
            <StackTool $width={49}><ViewerIcon />Viewer</StackTool>
          </ToolGrid>
        </Panel>

        <Panel title="Sweep" width={449} green>
          <Column $gap={12} $top={8}>
            <Tool $dim><SketchIcon />Sketch Path</Tool>
            <Tool><PickPathIcon />Pick Path</Tool>
          </Column>
          <Column $left={10}><Divider /></Column>
          <Column $left={8}>
            <StackTool $width={48}><SelectProfileIcon />Select<br />Profile</StackTool>
          </Column>
          <Column $left={3} $top={3}>
            <Field>
              Profile:
              <ComboWrap>
                <Combo aria-label="Profile" defaultValue=""><option value="" /></Combo>
                <Icon w={9} h={5}><path d="M0 0h9L4.500 5z" fill="#333" /></Icon>
              </ComboWrap>
            </Field>
            <ToolRow>
              <Tool $dim><EditProfileIcon />Edit Profile</Tool>
              <Tool $dim><LoadProfileIcon />Load Profile</Tool>
            </ToolRow>
          </Column>
        </Panel>
      </Ribbon>

      <OptionsBar>p</OptionsBar>

      <Main>
        <Dock>
          <DockTitle><CloseButton aria-label="Close properties"><CloseX /></CloseButton></DockTitle>
          <PropsPanel>
            <TypeSelector aria-label="Type selector">
              <Icon w={9} h={5}><path d="M0 0h9L4.500 5z" fill="#999" /></Icon>
            </TypeSelector>
            <FilterRow>
              <FilterWrap>
                <FilterSelect aria-label="Element filter" defaultValue="Models"><option>Models</option></FilterSelect>
                <ThinChevron />
              </FilterWrap>
              <EditType><EditTypeIcon />Edit Type</EditType>
            </FilterRow>
            <GridArea>
              <PropTable>
                <colgroup><col width={36} /><col /></colgroup>
                <tbody>
                  {properties.map((p, i) => (
                    <React.Fragment key={i}>
                      <GroupRow />
                      <tr>
                        <NameCell><NameText>{p.name}</NameText></NameCell>
                        <ValueCell $focus={p.check}>
                          {p.check ? <Check type="checkbox" aria-label="Property value" /> : p.value}
                        </ValueCell>
                      </tr>
                    </React.Fragment>
                  ))}
                  <GroupRow />
                </tbody>
              </PropTable>
              <Scrollbar>
                <ScrollArrow aria-label="Scroll up"><Chevron /></ScrollArrow>
                <Thumb $before={0} $size={113} />
                <ScrollArrow aria-label="Scroll down"><Chevron down /></ScrollArrow>
              </Scrollbar>
            </GridArea>
            <ApplyButton>Apply</ApplyButton>
          </PropsPanel>

          <DockTitle>
            <DockName>- Andrem VBC(Recovery)(R...</DockName>
            <CloseButton aria-label="Close browser"><CloseX /></CloseButton>
          </DockTitle>
          <Browser>
            <Tree>
              {browserRows.map((r, i) => (
                <TreeItem key={i} $level={r.level} $selected={r.selected}>{r.text}</TreeItem>
              ))}
            </Tree>
            <Scrollbar>
              <ScrollArrow aria-label="Scroll up"><Chevron /></ScrollArrow>
              <Thumb $before={149} $size={32} />
            </Scrollbar>
          </Browser>
        </Dock>

        <ViewFrame>
          <IsolateFrame><Model /></IsolateFrame>
          <IsolateLabel>Temporary Hide/Isolate</IsolateLabel>
        </ViewFrame>
      </Main>
    </Shell>
  );
}
